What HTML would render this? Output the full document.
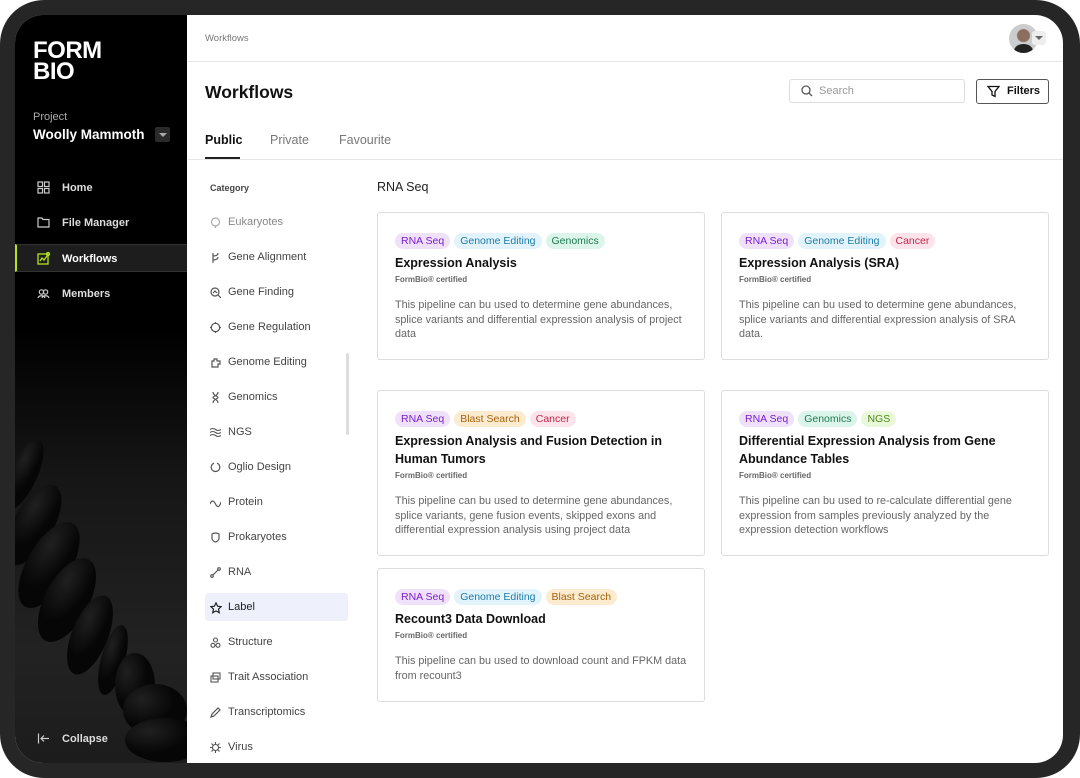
<!DOCTYPE html>
<html><head><meta charset="utf-8"><style>
*{box-sizing:border-box;margin:0;padding:0}
body{width:1080px;height:778px;background:#fff;font-family:"Liberation Sans",sans-serif;overflow:hidden;position:relative}
.frame{position:absolute;left:0;top:0;width:1080px;height:778px;background:#262626;border-radius:44px}
.screen{position:absolute;left:15px;top:15px;width:1048px;height:748px;background:#fff;border-radius:28px;overflow:hidden}
.side{position:absolute;left:0;top:0;width:172px;height:748px;background:linear-gradient(180deg,#000 0,#000 42%,#161616 62%,#222 85%,#1c1c1c 100%)}
.logo{position:absolute;left:18px;top:25px;color:#fff;font-weight:bold;font-size:24px;line-height:21px;letter-spacing:-0.5px}
.proj{position:absolute;left:18px;top:96px;color:#aaa;font-size:11px}
.pname{position:absolute;left:18px;top:112px;color:#fff;font-size:13.5px;font-weight:bold}
.dd{position:absolute;left:140px;top:112px;width:15px;height:15px;background:#2a2a2a;border-radius:2px}
.dd:after{content:"";position:absolute;left:4px;top:6px;border:4px solid transparent;border-top:4px solid #aaa;border-bottom:0}
.nav{position:absolute;left:0;width:172px;height:28px;color:#ddd;font-size:11px;font-weight:bold;padding:8px 0 0 47px}
.nav svg{position:absolute;left:22px;top:7px}
.nav.act{background:#1d1d1d;border-left:2px solid #b6e21b;border-top:1px solid #333;border-bottom:1px solid #333;color:#fff}
.blobs{position:absolute;left:0;top:420px}
.main{position:absolute;left:173px;top:0;right:0;bottom:0}
.crumb{position:absolute;left:17px;top:18px;font-size:9.5px;color:#777}
.hline{position:absolute;left:0;right:0;top:46px;border-top:1px solid #e6e6e6}
.avatar{position:absolute;left:821px;top:9px;width:29px;height:29px;border-radius:50%;background:radial-gradient(circle at 50% 40%,#8a6f60 0 6px,#ccc 7px);overflow:hidden}
.avatar:after{content:"";position:absolute;left:5px;top:20px;width:19px;height:14px;border-radius:50%;background:#222}
.avdd{position:absolute;left:844px;top:16px;width:14px;height:14px;background:#eee;border-radius:3px}
.avdd:after{content:"";position:absolute;left:3px;top:5px;border:4px solid transparent;border-top:4px solid #666;border-bottom:0}
h1{position:absolute;left:17px;top:67px;font-size:17.5px;font-weight:bold;color:#111}
.search{position:absolute;left:601px;top:64px;width:176px;height:24px;border:1px solid #ddd;border-radius:3px;font-size:11px;color:#999;padding:5px 0 0 29px}
.search svg{position:absolute;left:11px;top:5px}
.filters{position:absolute;left:788px;top:64px;width:73px;height:25px;border:1px solid #555;border-radius:3px;font-size:11px;font-weight:bold;padding:5px 0 0 30px;color:#111}
.filters svg{position:absolute;left:10px;top:5px}
.tab{position:absolute;top:118px;font-size:12.5px;color:#777}
.tab.a{color:#111;font-weight:bold}
.tabul{position:absolute;left:17px;top:142px;width:35px;height:2px;background:#222}
.tline{position:absolute;left:0;right:0;top:144px;border-top:1px solid #e6e6e6}
.cat{position:absolute;left:22px;top:168px;font-size:9px;color:#444;font-weight:bold}
.ci{position:absolute;left:17px;width:143px;height:28px;font-size:11px;color:#444;padding:8px 0 0 23px}
.ci svg{position:absolute;left:5px;top:9px}
.ci.sel{background:#eef0fb;border-radius:3px;color:#222}
.scroll{position:absolute;left:158px;top:338px;width:3px;height:82px;background:#ddd;border-radius:2px}
.sec{position:absolute;left:189px;top:165px;font-size:12.5px;color:#222}
.card{position:absolute;width:328px;border:1px solid #ddd;border-radius:3px;padding:18px 17px}
.tags span{display:inline-block;font-size:10.5px;padding:2px 6px;border-radius:8px;margin-right:4px}
.t1{background:#f0e1fb;color:#7a1fd0}.t2{background:#e3f3fb;color:#1d7da8}.t3{background:#dcf5ea;color:#1e7a52}
.t4{background:#fdebd0;color:#a3620b}.t5{background:#fde4ea;color:#c0274d}.t6{background:#e9f8d8;color:#4b8a18}
.card h3{font-size:12.5px;color:#111;margin-top:5px;line-height:18px}
.cert{font-size:8px;color:#666;margin-top:3px;font-weight:bold}
.desc{font-size:10.8px;color:#666;line-height:14.5px;margin-top:14px}
</style></head><body>
<div class="frame"></div>
<div class="screen">
 <div class="side">
  <svg class="blobs" width="172" height="330" viewBox="0 0 172 330">
   <defs><radialGradient id="g" cx="0.3" cy="0.3"><stop offset="0" stop-color="#202020"/><stop offset="1" stop-color="#060606"/></radialGradient></defs>
   <g fill="url(#g)">
    <ellipse cx="8" cy="40" rx="14" ry="38" transform="rotate(25 8 40)"/>
    <ellipse cx="18" cy="90" rx="20" ry="45" transform="rotate(30 18 90)"/>
    <ellipse cx="34" cy="130" rx="22" ry="48" transform="rotate(30 34 130)"/>
    <ellipse cx="52" cy="165" rx="22" ry="46" transform="rotate(28 52 165)"/>
    <ellipse cx="75" cy="200" rx="18" ry="42" transform="rotate(22 75 200)"/>
    <ellipse cx="98" cy="225" rx="12" ry="36" transform="rotate(15 98 225)"/>
    <ellipse cx="120" cy="250" rx="20" ry="32"/>
    <ellipse cx="140" cy="275" rx="32" ry="26"/>
    <ellipse cx="150" cy="305" rx="40" ry="22"/>
   </g>
  </svg>
  <div class="logo">FORM<br>BIO</div>
  <div class="proj">Project</div>
  <div class="pname">Woolly Mammoth</div>
  <div class="dd"></div>
  <div class="nav" style="top:159px"><svg width="13" height="13" fill="none" stroke="#ccc" stroke-width="1.2"><rect x="1" y="1" width="4.5" height="4.5"/><rect x="7.5" y="1" width="4.5" height="4.5"/><rect x="1" y="7.5" width="4.5" height="4.5"/><rect x="7.5" y="7.5" width="4.5" height="4.5"/></svg>Home</div>
  <div class="nav" style="top:194px"><svg width="13" height="13" fill="none" stroke="#ccc" stroke-width="1.2"><path d="M1 2h4l1 1.5h6V11H1z"/></svg>File Manager</div>
  <div class="nav act" style="top:229px;padding-left:45px"><svg width="13" height="13" fill="none" stroke="#b6e21b" stroke-width="1.3" style="left:20px"><rect x="1" y="2" width="10" height="10"/><path d="M3 9l2-3 2 2 3-4"/><circle cx="11" cy="2" r="1.5"/></svg>Workflows</div>
  <div class="nav" style="top:265px"><svg width="13" height="13" fill="none" stroke="#ccc" stroke-width="1.2"><circle cx="4.5" cy="5" r="2.2"/><circle cx="8.5" cy="5" r="2.2"/><path d="M1 11c1-3 6-3 7 0M5 11c1-3 6-3 7 0"/></svg>Members</div>
  <div class="nav" style="top:710px"><svg width="13" height="13" fill="none" stroke="#ccc" stroke-width="1.2"><path d="M1.5 1.5v10M12 6.5H4M7 3.5l-3 3 3 3"/></svg>Collapse</div>
 </div>
 <div class="main">
  <div class="crumb">Workflows</div>
  <div class="avatar"></div><div class="avdd"></div>
  <div class="hline"></div>
  <h1>Workflows</h1>
  <div class="search"><svg width="12" height="12" fill="none" stroke="#555" stroke-width="1.3"><circle cx="5" cy="5" r="4"/><path d="M8 8l3 3"/></svg>Search</div>
  <div class="filters"><svg width="13" height="13" fill="none" stroke="#111" stroke-width="1.3"><path d="M1 1.5h11L8 6.5v5l-3-1.5V6.5z"/></svg>Filters</div>
  <div class="tab a" style="left:17px">Public</div>
  <div class="tab" style="left:82px">Private</div>
  <div class="tab" style="left:151px">Favourite</div>
  <div class="tline"></div><div class="tabul"></div>
  <div class="cat">Category</div>
  <div class="ci" style="top:193px;color:#888"><svg width="11" height="11" fill="none" stroke="#aaa" stroke-width="1.2"><circle cx="5.5" cy="5" r="4"/><path d="M5.5 9v2"/></svg>Eukaryotes</div>
  <div class="ci" style="top:228px"><svg width="11" height="11" fill="none" stroke="#555" stroke-width="1.2"><path d="M3 1v10M3 4c3 0 5-1 5-3M3 8c3 0 5-1 5-3"/></svg>Gene Alignment</div>
  <div class="ci" style="top:263px"><svg width="11" height="11" fill="none" stroke="#555" stroke-width="1.2"><circle cx="5" cy="5" r="4"/><path d="M8 8l3 3M3 6l2-2 2 2"/></svg>Gene Finding</div>
  <div class="ci" style="top:298px"><svg width="11" height="11" fill="none" stroke="#555" stroke-width="1.2"><circle cx="5.5" cy="5.5" r="4.2"/><path d="M5.5 0v2M5.5 9v2M0 5.5h2M9 5.5h2"/></svg>Gene Regulation</div>
  <div class="ci" style="top:333px"><svg width="11" height="11" fill="none" stroke="#555" stroke-width="1.2"><path d="M2 4h2V2h3v2h3v3H8v3H2z"/></svg>Genome Editing</div>
  <div class="ci" style="top:368px"><svg width="11" height="11" fill="none" stroke="#555" stroke-width="1.2"><path d="M3 0c0 4 5 4 5 5.5S3 7 3 11M8 0c0 4-5 4-5 5.5S8 7 8 11"/></svg>Genomics</div>
  <div class="ci" style="top:403px"><svg width="11" height="11" fill="none" stroke="#555" stroke-width="1.1"><path d="M0 2.5q2.7-2 5.5 0t5.5 0M0 5.5q2.7-2 5.5 0t5.5 0M0 8.5q2.7-2 5.5 0t5.5 0"/></svg>NGS</div>
  <div class="ci" style="top:438px"><svg width="11" height="11" fill="none" stroke="#555" stroke-width="1.2"><path d="M4 1.2A4.3 4.3 0 1 0 7 1.2"/></svg>Oglio Design</div>
  <div class="ci" style="top:473px"><svg width="11" height="11" fill="none" stroke="#555" stroke-width="1.2"><path d="M0 7q2.5-6 5.5 0t5.5-2"/></svg>Protein</div>
  <div class="ci" style="top:508px"><svg width="11" height="11" fill="none" stroke="#555" stroke-width="1.2"><path d="M2 2q3.5-2 7 0v5q-3.5 6-7 0z"/></svg>Prokaryotes</div>
  <div class="ci" style="top:543px"><svg width="11" height="11" fill="none" stroke="#555" stroke-width="1.2"><circle cx="2" cy="9" r="1.3"/><circle cx="9" cy="2" r="1.3"/><path d="M3 8l5-5"/></svg>RNA</div>
  <div class="ci sel" style="top:578px"><svg width="12" height="12" fill="none" stroke="#222" stroke-width="1.2"><path d="M6 .8l1.6 3.4 3.6.4-2.7 2.5.8 3.6L6 8.9l-3.3 1.8.8-3.6L.8 4.6l3.6-.4z"/></svg>Label</div>
  <div class="ci" style="top:613px"><svg width="11" height="11" fill="none" stroke="#555" stroke-width="1.1"><circle cx="5.5" cy="3" r="2"/><circle cx="3" cy="8.3" r="2"/><circle cx="8" cy="8.3" r="2"/></svg>Structure</div>
  <div class="ci" style="top:648px"><svg width="11" height="11" fill="none" stroke="#555" stroke-width="1.1"><rect x="3" y="1" width="7" height="6"/><rect x="1" y="4" width="7" height="6"/></svg>Trait Association</div>
  <div class="ci" style="top:683px"><svg width="11" height="11" fill="none" stroke="#555" stroke-width="1.2"><path d="M1 10l1-3 6-6 2 2-6 6z"/></svg>Transcriptomics</div>
  <div class="ci" style="top:718px"><svg width="11" height="11" fill="none" stroke="#555" stroke-width="1.1"><circle cx="5.5" cy="5.5" r="3"/><path d="M5.5 0v2.5M5.5 8.5V11M0 5.5h2.5M8.5 5.5H11M1.5 1.5l2 2M7.5 7.5l2 2M9.5 1.5l-2 2M3.5 7.5l-2 2"/></svg>Virus</div>
  <div class="scroll"></div>
  <div class="sec">RNA Seq</div>

  <div class="card" style="left:189px;top:197px;height:148px"><div class="tags"><span class="t1">RNA Seq</span><span class="t2">Genome Editing</span><span class="t3">Genomics</span></div><h3>Expression Analysis</h3><div class="cert">FormBio® certified</div><div class="desc">This pipeline can bu used to determine gene abundances, splice variants and differential expression analysis of project data</div></div>
  <div class="card" style="left:533px;top:197px;height:148px"><div class="tags"><span class="t1">RNA Seq</span><span class="t2">Genome Editing</span><span class="t5">Cancer</span></div><h3>Expression Analysis (SRA)</h3><div class="cert">FormBio® certified</div><div class="desc">This pipeline can bu used to determine gene abundances, splice variants and differential expression analysis of SRA data.</div></div>
  <div class="card" style="left:189px;top:375px;height:166px"><div class="tags"><span class="t1">RNA Seq</span><span class="t4">Blast Search</span><span class="t5">Cancer</span></div><h3>Expression Analysis and Fusion Detection in Human Tumors</h3><div class="cert">FormBio® certified</div><div class="desc">This pipeline can bu used to determine gene abundances, splice variants, gene fusion events, skipped exons and differential expression analysis using project data</div></div>
  <div class="card" style="left:533px;top:375px;height:166px"><div class="tags"><span class="t1">RNA Seq</span><span class="t3">Genomics</span><span class="t6">NGS</span></div><h3>Differential Expression Analysis from Gene Abundance Tables</h3><div class="cert">FormBio® certified</div><div class="desc">This pipeline can bu used to re-calculate differential gene expression from samples previously analyzed by the expression detection workflows</div></div>
  <div class="card" style="left:189px;top:553px;height:134px"><div class="tags"><span class="t1">RNA Seq</span><span class="t2">Genome Editing</span><span class="t4">Blast Search</span></div><h3>Recount3 Data Download</h3><div class="cert">FormBio® certified</div><div class="desc">This pipeline can bu used to download count and FPKM data from recount3</div></div>
 </div>
</div>
</body></html>
